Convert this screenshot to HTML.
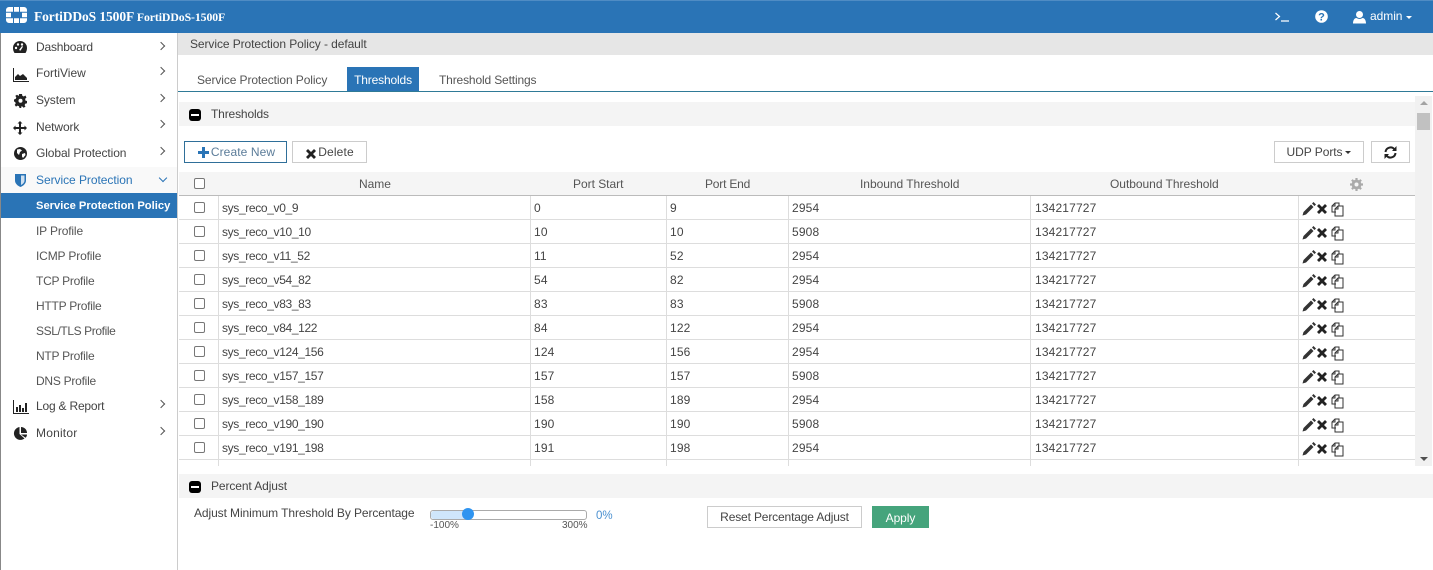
<!DOCTYPE html>
<html><head><meta charset="utf-8"><style>
html,body{margin:0;padding:0}
body{width:1433px;height:570px;overflow:hidden;position:relative;background:#fff;font:12px/14px "Liberation Sans",sans-serif;color:#444;letter-spacing:-.05px}
.a{position:absolute;white-space:nowrap}
svg{position:absolute;overflow:visible}
.m{left:36px;color:#444;letter-spacing:-.1px}
.s{left:36px;color:#555;letter-spacing:-.15px}
.chev{position:absolute;left:158px;width:5px;height:5px;border-top:1px solid #555;border-right:1px solid #555;transform:rotate(45deg)}
.btn{position:absolute;box-sizing:border-box;height:22px;border:1px solid #ccc;background:#fff;text-align:center;line-height:20px}
.r{position:absolute;left:179px;width:1236px;height:24px;border-bottom:1px solid #ddd;box-sizing:border-box}
.r i{position:absolute;top:0;height:24px;width:1px;background:#ddd}
.r b{position:absolute;top:5px;font-weight:normal;color:#444;letter-spacing:.15px}
.r b:nth-of-type(1){letter-spacing:-.35px}
.cb{position:absolute;left:15px;top:6px;width:9px;height:9px;border:1px solid #777;border-radius:2px;background:#fff}
.h{position:absolute;top:177px;color:#555;letter-spacing:-.03px}
.mn{position:absolute;width:12px;height:12px;border-radius:3px;background:#000}
.mn:after{content:"";position:absolute;left:2px;top:5px;width:8px;height:2px;background:#fff}
</style></head><body>
<svg width="0" height="0" style="position:absolute"><defs>
<symbol id="act" viewBox="0 0 44 16">
<path d="M0.500 14.500l1-3.500 7.500-7.500 2.500 2.500-7.500 7.500zM10 2.500l1.500-1.500 2.500 2.500-1.500 1.500z" fill="#333"/>
<path d="M15 5l2-2 3 3 3-3 2 2-3 3 3 3-2 2-3-3-3 3-2-2 3-3z" fill="#222"/>
<path d="M34 11h-4V5l3-3h4v3M37 5h-1l-3 3v7h8V5zM33 2v3h-3M36 5v3h-3" fill="none" stroke="#333" stroke-width="1"/>
</symbol>
</defs></svg>

<div class="a" style="left:0;top:0;width:1433px;height:33px;background:#2a74b6"></div>
<div class="a" style="left:0;top:0;width:1433px;height:1px;background:#4f8cc4"></div>
<svg style="left:6px;top:7px" width="21" height="16" viewBox="0 0 21 16" fill="#fff"><path d="M3 0h4v4.700H0V3a3 3 0 0 1 3-3zM8 0h5v4.700H8zM14 0h4a3 3 0 0 1 3 3v1.700h-7zM0 5.700h5v4.600H0zM16 5.700h5v4.600h-5zM0 11.300h7V16H3a3 3 0 0 1-3-3zM8 11.300h5V16H8zM14 11.300h7V13a3 3 0 0 1-3 3h-4z"/></svg>
<div class="a" style="left:34px;top:9px;color:#fff;font:bold 13.500px/16px 'Liberation Serif',serif;letter-spacing:-.1px">FortiDDoS 1500F <span style="font-size:11.800px;letter-spacing:-.1px">FortiDDoS-1500F</span></div>
<svg style="left:1275px;top:12px" width="15" height="10" fill="none" stroke="#fff" stroke-width="1.200"><path d="M0.500 1l4 3.500-4 3.500M6 9h8"/></svg>
<svg style="left:1315px;top:10px" width="13" height="13"><circle cx="6.500" cy="6.500" r="6.300" fill="#fff"/><text x="6.500" y="10.500" text-anchor="middle" font-family="Liberation Sans" font-weight="bold" font-size="11" fill="#2a74b6">?</text></svg>
<svg style="left:1353px;top:11px" width="13" height="13" fill="#fff"><circle cx="6.500" cy="3.500" r="3.500"/><path d="M0 12.500c0-4 2-5.500 3.500-5.500 2 1.300 4 1.300 6 0 1.500 0 3.500 1.500 3.500 5.500z"/></svg>
<div class="a" style="left:1370px;top:9px;color:#fff">admin</div>
<div class="a" style="left:1406px;top:16px;border:3px solid transparent;border-top-color:#fff"></div>

<div class="a" style="left:0;top:33px;width:1px;height:537px;background:#888"></div>
<div class="a" style="left:177px;top:33px;width:1px;height:537px;background:#ccc"></div>

<svg style="left:13px;top:41px" width="14" height="12" viewBox="0 0 14 12"><path d="M7 0a7 7 0 0 1 7 7c0 2-.6 3.500-1.500 5h-11C.6 10.500 0 9 0 7a7 7 0 0 1 7-7z" fill="#222"/><circle cx="3" cy="7" r="1.200" fill="#fff"/><circle cx="5" cy="3.500" r="1.200" fill="#fff"/><circle cx="9" cy="3.500" r="1.200" fill="#fff"/><path d="M6 9l3-4 1 .6-2.500 4z" fill="#fff"/></svg>
<div class="a m" style="top:40px;letter-spacing:-.2px">Dashboard</div><div class="chev" style="top:43px"></div>
<svg style="left:13px;top:68px" width="16" height="14" viewBox="0 0 16 14"><path d="M.500 0v13.500H16" fill="none" stroke="#222"/><path d="M2 12V9l3-3 2 2 3-2 2 2 2 2v2z" fill="#222"/></svg>
<div class="a m" style="top:66px;letter-spacing:0">FortiView</div><div class="chev" style="top:68px"></div>
<svg style="left:14px;top:94px" width="13" height="13" viewBox="0 0 13 13"><path d="M5 0h3l.3 1.800 1.500.7L11.400 1.500l1.100 2-1.300 1.300.1 1.700 1.700.5v2.300l-1.800.4-.6 1.400.9 1.500-1.900 1.200-1.200-1.300-1.500.1L7.500 14h-2l-.5-1.800-1.500-.6-1.500 1-1.300-1.700 1-1.400-.5-1.500L0 7.500v-2l1.700-.6.600-1.500-1-1.500L3 .8l1.400 1 .5-.2z" fill="#222"/><circle cx="6.500" cy="6.800" r="2" fill="#fff"/></svg>
<div class="a m" style="top:93px">System</div><div class="chev" style="top:95px"></div>
<svg style="left:13px;top:121px" width="14" height="14" viewBox="0 0 14 14" fill="#222"><path d="M7 0l2.500 2.500H8v3.500h3.500V4.500L14 7l-2.500 2.500V8H8v3.500h1.500L7 14l-2.500-2.500H6V8H2.500v1.500L0 7l2.500-2.500V6H6V2.500H4.500z"/></svg>
<div class="a m" style="top:120px">Network</div><div class="chev" style="top:121px"></div>
<svg style="left:14px;top:147px" width="13" height="13" viewBox="0 0 13 13"><circle cx="6.500" cy="6.500" r="6.500" fill="#222"/><path d="M3 2.500l3-.5 2 1.500-2 1.500-1 3-2-2zM8 7l3-1 .5 2-2.500 3-1-1.500z" fill="#fff"/></svg>
<div class="a m" style="top:146px">Global Protection</div><div class="chev" style="top:148px"></div>

<div class="a" style="left:1px;top:167px;width:176px;height:26px;background:#f9f9f9"></div>
<svg style="left:15px;top:174px" width="11" height="13" viewBox="0 0 11 13"><path d="M0 0h11v6.500c0 3-2.500 5.300-5.500 6.500C2.500 11.800 0 9.500 0 6.500z" fill="#2a74b6"/><path d="M6 1.500h3.500v5c0 2-1.500 3.500-3.500 4.500z" fill="#cfe0f0"/></svg>
<div class="a" style="left:36px;top:173px;color:#2a74b6">Service Protection</div>
<div class="chev" style="top:175px;left:160px;transform:rotate(135deg);border-color:#2a74b6"></div>
<div class="a" style="left:1px;top:193px;width:176px;height:25px;background:#2a74b6"></div>
<div class="a" style="left:36px;top:199px;color:#fff;font-weight:bold;font-size:11.200px;letter-spacing:0">Service Protection Policy</div>
<div class="a s" style="top:224px">IP Profile</div>
<div class="a s" style="top:249px">ICMP Profile</div>
<div class="a s" style="top:274px;letter-spacing:-.25px">TCP Profile</div>
<div class="a s" style="top:299px;letter-spacing:-.25px">HTTP Profile</div>
<div class="a s" style="top:324px;letter-spacing:-.4px">SSL/TLS Profile</div>
<div class="a s" style="top:349px;letter-spacing:-.25px">NTP Profile</div>
<div class="a s" style="top:374px;letter-spacing:-.25px">DNS Profile</div>
<svg style="left:13px;top:400px" width="16" height="14" viewBox="0 0 16 14"><path d="M.500 0v13.500H16" fill="none" stroke="#222"/><path d="M3 7h2v5H3zM6 5h2v7H6zM9 8h2v4H9zM12 3h2v9h-2z" fill="#222"/></svg>
<div class="a m" style="top:399px;letter-spacing:-.2px">Log &amp; Report</div><div class="chev" style="top:401px"></div>
<svg style="left:13px;top:427px" width="14" height="13" viewBox="0 0 14 13" fill="#222"><path d="M6.500 0v7l5 4.500A6.500 6.500 0 1 1 6.500 0zM8 0a6 6 0 0 1 6 6H8zM8 7.500h6c0 1.500-.6 2.500-1.500 3.200z"/></svg>
<div class="a m" style="top:426px;letter-spacing:.2px">Monitor</div><div class="chev" style="top:428px"></div>

<div class="a" style="left:178px;top:33px;width:1255px;height:22px;background:#e6e6e6"></div>
<div class="a" style="left:190px;top:37px;color:#444;letter-spacing:-.08px">Service Protection Policy - default</div>

<div class="a" style="left:197px;top:73px;color:#555;letter-spacing:-.1px">Service Protection Policy</div>
<div class="a" style="left:347px;top:67px;width:72px;height:24px;background:#2a74b6;color:#fff;text-align:center;line-height:26px;letter-spacing:-.15px">Thresholds</div>
<div class="a" style="left:439px;top:73px;color:#555;letter-spacing:-.15px">Threshold Settings</div>
<div class="a" style="left:178px;top:91px;width:1255px;height:1px;background:#2f7a97"></div>

<div class="a" style="left:179px;top:102px;width:1236px;height:24px;background:#f4f4f4"></div>
<div class="mn" style="left:189px;top:109px"></div>
<div class="a" style="left:211px;top:107px;color:#444;letter-spacing:-.15px">Thresholds</div>

<div class="btn" style="left:184px;top:141px;width:103px;border-color:#2f6f99;color:#5b7c99;padding-left:15px;letter-spacing:.1px">Create New</div>
<svg style="left:198px;top:147px" width="11" height="11" fill="#2a74b6"><path d="M4 0h3v4h4v3H7v4H4V7H0V4h4z"/></svg>
<div class="btn" style="left:292px;top:141px;width:75px;padding-left:13px;letter-spacing:.15px">Delete</div>
<svg style="left:306px;top:149px" width="10" height="10" fill="#222"><path d="M2 0l3 3 3-3 2 2-3 3 3 3-2 2-3-3-3 3-2-2 3-3-3-3z"/></svg>
<div class="btn" style="left:1274px;top:141px;width:90px;padding-right:9px">UDP Ports</div>
<div class="a" style="left:1345px;top:151px;border:3px solid transparent;border-top-color:#333"></div>
<div class="btn" style="left:1371px;top:141px;width:39px"></div>
<svg style="left:1384px;top:146px" width="13" height="13" viewBox="0 0 13 13" fill="none" stroke="#222" stroke-width="2"><path d="M1.500 6A5 5 0 0 1 10.500 3.500M11.500 7A5 5 0 0 1 2.500 9.500"/><path d="M12.500 0v5h-4.500zM.500 13V8H5z" fill="#222" stroke="none"/></svg>

<div class="a" style="left:179px;top:172px;width:1236px;height:24px;background:#f5f5f5;border-bottom:1px solid #bbb;box-sizing:border-box"></div>
<div class="cb" style="left:194px;top:178px"></div>
<div class="h" style="left:359px">Name</div>
<div class="h" style="left:573px">Port Start</div>
<div class="h" style="left:705px;letter-spacing:-.2px">Port End</div>
<div class="h" style="left:860px">Inbound Threshold</div>
<div class="h" style="left:1110px">Outbound Threshold</div>
<svg style="left:1350px;top:178px" width="13" height="13" viewBox="0 0 13 13"><path d="M6.500 0v13M0 6.500h13M1.900 1.900l9.200 9.200M11.100 1.900l-9.200 9.200" stroke="#aaa" stroke-width="2.200"/><circle cx="6.500" cy="6.500" r="3.600" fill="none" stroke="#aaa" stroke-width="2.600"/><circle cx="6.500" cy="6.500" r="2" fill="#f5f5f5"/></svg>

<div class="r" style="top:196px"><i style="left:39px"></i><i style="left:351px"></i><i style="left:487px"></i><i style="left:609px"></i><i style="left:851px"></i><i style="left:1119px"></i><span class="cb"></span><b style="left:43px">sys_reco_v0_9</b><b style="left:355px">0</b><b style="left:491px">9</b><b style="left:613px">2954</b><b style="left:856px">134217727</b><svg style="left:1123px;top:5px" width="44" height="16"><use href="#act"/></svg></div>
<div class="r" style="top:220px"><i style="left:39px"></i><i style="left:351px"></i><i style="left:487px"></i><i style="left:609px"></i><i style="left:851px"></i><i style="left:1119px"></i><span class="cb"></span><b style="left:43px">sys_reco_v10_10</b><b style="left:355px">10</b><b style="left:491px">10</b><b style="left:613px">5908</b><b style="left:856px">134217727</b><svg style="left:1123px;top:5px" width="44" height="16"><use href="#act"/></svg></div>
<div class="r" style="top:244px"><i style="left:39px"></i><i style="left:351px"></i><i style="left:487px"></i><i style="left:609px"></i><i style="left:851px"></i><i style="left:1119px"></i><span class="cb"></span><b style="left:43px">sys_reco_v11_52</b><b style="left:355px">11</b><b style="left:491px">52</b><b style="left:613px">2954</b><b style="left:856px">134217727</b><svg style="left:1123px;top:5px" width="44" height="16"><use href="#act"/></svg></div>
<div class="r" style="top:268px"><i style="left:39px"></i><i style="left:351px"></i><i style="left:487px"></i><i style="left:609px"></i><i style="left:851px"></i><i style="left:1119px"></i><span class="cb"></span><b style="left:43px">sys_reco_v54_82</b><b style="left:355px">54</b><b style="left:491px">82</b><b style="left:613px">2954</b><b style="left:856px">134217727</b><svg style="left:1123px;top:5px" width="44" height="16"><use href="#act"/></svg></div>
<div class="r" style="top:292px"><i style="left:39px"></i><i style="left:351px"></i><i style="left:487px"></i><i style="left:609px"></i><i style="left:851px"></i><i style="left:1119px"></i><span class="cb"></span><b style="left:43px">sys_reco_v83_83</b><b style="left:355px">83</b><b style="left:491px">83</b><b style="left:613px">5908</b><b style="left:856px">134217727</b><svg style="left:1123px;top:5px" width="44" height="16"><use href="#act"/></svg></div>
<div class="r" style="top:316px"><i style="left:39px"></i><i style="left:351px"></i><i style="left:487px"></i><i style="left:609px"></i><i style="left:851px"></i><i style="left:1119px"></i><span class="cb"></span><b style="left:43px">sys_reco_v84_122</b><b style="left:355px">84</b><b style="left:491px">122</b><b style="left:613px">2954</b><b style="left:856px">134217727</b><svg style="left:1123px;top:5px" width="44" height="16"><use href="#act"/></svg></div>
<div class="r" style="top:340px"><i style="left:39px"></i><i style="left:351px"></i><i style="left:487px"></i><i style="left:609px"></i><i style="left:851px"></i><i style="left:1119px"></i><span class="cb"></span><b style="left:43px">sys_reco_v124_156</b><b style="left:355px">124</b><b style="left:491px">156</b><b style="left:613px">2954</b><b style="left:856px">134217727</b><svg style="left:1123px;top:5px" width="44" height="16"><use href="#act"/></svg></div>
<div class="r" style="top:364px"><i style="left:39px"></i><i style="left:351px"></i><i style="left:487px"></i><i style="left:609px"></i><i style="left:851px"></i><i style="left:1119px"></i><span class="cb"></span><b style="left:43px">sys_reco_v157_157</b><b style="left:355px">157</b><b style="left:491px">157</b><b style="left:613px">5908</b><b style="left:856px">134217727</b><svg style="left:1123px;top:5px" width="44" height="16"><use href="#act"/></svg></div>
<div class="r" style="top:388px"><i style="left:39px"></i><i style="left:351px"></i><i style="left:487px"></i><i style="left:609px"></i><i style="left:851px"></i><i style="left:1119px"></i><span class="cb"></span><b style="left:43px">sys_reco_v158_189</b><b style="left:355px">158</b><b style="left:491px">189</b><b style="left:613px">2954</b><b style="left:856px">134217727</b><svg style="left:1123px;top:5px" width="44" height="16"><use href="#act"/></svg></div>
<div class="r" style="top:412px"><i style="left:39px"></i><i style="left:351px"></i><i style="left:487px"></i><i style="left:609px"></i><i style="left:851px"></i><i style="left:1119px"></i><span class="cb"></span><b style="left:43px">sys_reco_v190_190</b><b style="left:355px">190</b><b style="left:491px">190</b><b style="left:613px">5908</b><b style="left:856px">134217727</b><svg style="left:1123px;top:5px" width="44" height="16"><use href="#act"/></svg></div>
<div class="r" style="top:436px"><i style="left:39px"></i><i style="left:351px"></i><i style="left:487px"></i><i style="left:609px"></i><i style="left:851px"></i><i style="left:1119px"></i><span class="cb"></span><b style="left:43px">sys_reco_v191_198</b><b style="left:355px">191</b><b style="left:491px">198</b><b style="left:613px">2954</b><b style="left:856px">134217727</b><svg style="left:1123px;top:5px" width="44" height="16"><use href="#act"/></svg></div>
<div class="a" style="left:179px;top:460px;width:1236px;height:6px;overflow:hidden">
<i style="position:absolute;left:39px;top:0;width:1px;height:6px;background:#ddd"></i><i style="position:absolute;left:351px;top:0;width:1px;height:6px;background:#ddd"></i><i style="position:absolute;left:487px;top:0;width:1px;height:6px;background:#ddd"></i><i style="position:absolute;left:609px;top:0;width:1px;height:6px;background:#ddd"></i><i style="position:absolute;left:851px;top:0;width:1px;height:6px;background:#ddd"></i><i style="position:absolute;left:1119px;top:0;width:1px;height:6px;background:#ddd"></i>
<span class="cb"></span><svg style="left:1123px;top:5px" width="44" height="16"><use href="#act"/></svg></div>

<div class="a" style="left:1415px;top:96px;width:17px;height:370px;background:#f1f1f1"></div>
<div class="a" style="left:1417px;top:113px;width:13px;height:17px;background:#c1c1c1"></div>
<div class="a" style="left:1420px;top:101px;border:4px solid transparent;border-top:0;border-bottom:4px solid #a3a3a3"></div>
<div class="a" style="left:1420px;top:457px;border:4px solid transparent;border-bottom:0;border-top:4px solid #505050"></div>

<div class="a" style="left:179px;top:474px;width:1254px;height:24px;background:#f4f4f4"></div>
<div class="mn" style="left:189px;top:481px"></div>
<div class="a" style="left:211px;top:479px;color:#444;letter-spacing:-.1px">Percent Adjust</div>
<div class="a" style="left:194px;top:506px;color:#444;letter-spacing:-.09px">Adjust Minimum Threshold By Percentage</div>
<div class="a" style="left:430px;top:510px;width:155px;height:8px;border:1px solid #aaa;border-radius:3px;background:#fff"></div>
<div class="a" style="left:431px;top:511px;width:37px;height:8px;border-radius:3px 0 0 3px;background:#cfe6fb"></div>
<div class="a" style="left:462px;top:508px;width:12px;height:12px;border-radius:50%;background:#2f94f0"></div>
<div class="a" style="left:430px;top:520px;font-size:10px;line-height:12px;letter-spacing:0;color:#555">-100%</div>
<div class="a" style="left:562px;top:520px;font-size:10px;line-height:12px;letter-spacing:0;color:#555">300%</div>
<div class="a" style="left:596px;top:509px;font-size:11.500px;color:#4a90d0">0%</div>
<div class="btn" style="left:707px;top:506px;width:155px;letter-spacing:-.15px">Reset Percentage Adjust</div>
<div class="a" style="left:872px;top:506px;width:57px;height:22px;background:#45a47c;color:#fff;text-align:center;line-height:24px">Apply</div>
</body></html>
